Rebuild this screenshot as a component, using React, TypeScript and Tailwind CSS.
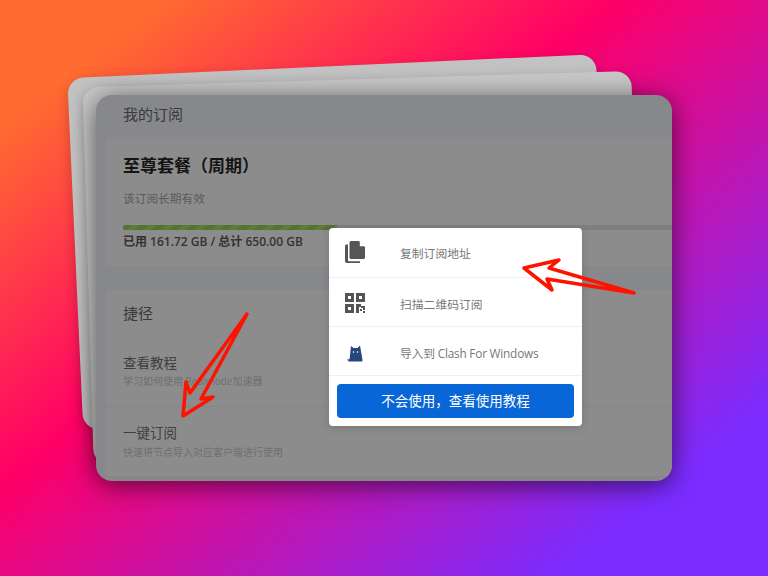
export default function App() {
  const font = { fontFamily: '"Open Sans", "Noto Sans CJK SC", sans-serif' };
  return (
    <div
      style={font}
      className="relative w-[768px] h-[576px] overflow-hidden bg-[linear-gradient(141.700deg,#ff6b30_11%,#ff0066_41%,#7b2cff_86%)] flex items-center justify-center"
    >
      <div className="absolute left-[75px] top-[66px] w-[529px] h-[352px] rounded-2xl bg-[#c2c2c2] rotate-[-2.6deg] shadow-[0_4px_12px_rgba(0,0,0,0.2)]" />
      <div className="absolute left-[88px] top-[79px] w-[549px] h-[378px] rounded-2xl bg-[#c8c8c8] rotate-[-1.7deg] shadow-[0_4px_12px_rgba(0,0,0,0.2)]" />

      <div className="relative w-[576px] h-[386px] rounded-2xl overflow-hidden bg-[#87888b] shadow-[0_4px_26px_rgba(0,0,0,0.6)] pl-[10px]">
        <div className="h-[42px] pl-[17px] flex items-end text-[15px] leading-[26px] text-[#3a3a3a] pb-[10px]">我的订阅</div>
        <section className="h-[129px] bg-[#8c8c8c] pl-[17px] pt-[17px] rounded-l-sm">
          <h2 className="text-[17px] leading-[24px] font-bold text-[#141414]">至尊套餐（周期）</h2>
          <p className="mt-[11px] text-[11.700px] leading-[18px] text-[#5a5a5a]">该订阅长期有效</p>
          <div className="mt-[18px] h-[5px] w-[560px] bg-[#7f7f7f]">
            <div className="h-full w-[214px] rounded-l-full bg-[repeating-linear-gradient(135deg,#557234_0px,#557234_6px,#5e7b3b_6px,#5e7b3b_12px)]" />
          </div>
          <p className="mt-[2px] text-[12px] leading-[20px] font-semibold text-[#333]">已用 161.72 GB / 总计 650.00 GB</p>
        </section>
        <section className="mt-[24px] h-[187px] bg-[#8c8c8c] rounded-l-sm">
          <div className="h-[47px] pl-[17px] flex items-center text-[15px] text-[#3a3a3a] border-b border-[#8a8a8a]">捷径</div>
          <div className="h-[70px] pl-[17px] pt-[16px] border-b border-[#858585]">
            <div className="text-[13.500px] leading-[20px] text-[#3f3f3f]">查看教程</div>
            <div className="mt-[1px] text-[10px] leading-[14px] text-[#6f6f6f]">学习如何使用 Realmode加速器</div>
          </div>
          <div className="h-[70px] pl-[17px] pt-[16px] border-b border-[#858585]">
            <div className="text-[13.500px] leading-[20px] text-[#3f3f3f]">一键订阅</div>
            <div className="mt-[2px] text-[10px] leading-[14px] text-[#6f6f6f]">快速将节点导入对应客户端进行使用</div>
          </div>
        </section>
      </div>

      <div className="absolute left-[329px] top-[228px] w-[253px] h-[198px] bg-white rounded shadow-[0_2px_8px_rgba(0,0,0,0.15)]">
        <div className="h-[49.500px] flex items-center border-b border-[#f0f0f0]">
          <div className="w-[71px] pl-[16px]">
            <svg width="20" height="22" viewBox="0 0 20 22" className="fill-[#555] block">
              <path d="M4.500 1.500 C4.500 .7 5.200 0 6 0 H14 L20 6 V16.500 C20 17.300 19.300 18 18.500 18 H6 C5.200 18 4.500 17.300 4.500 16.500 Z" />
              <path d="M3 3.500 V19.500 C3 20 3.500 20.300 4 20.300 H15 V22 H2 C.8 22 0 21.200 0 20 V5 C0 4.200 .7 3.500 1.500 3.500 Z" />
              <path d="M14 0 V6 H20 Z" fill="#fff" transform="translate(0.8,-0.8)" />
            </svg>
          </div>
          <span className="pt-[3px] text-[11.800px] text-[#777]">复制订阅地址</span>
        </div>
        <div className="h-[49.500px] flex items-center border-b border-[#f0f0f0]">
          <div className="w-[71px] pl-[16px] pt-[2px]">
            <svg width="20" height="20" viewBox="0 0 20 20" className="fill-[#555] block">
              <path fillRule="evenodd" d="M0 0H9V9H0ZM3 3V6H6V3Z" />
              <path fillRule="evenodd" d="M11 0H20V9H11ZM14 3V6H17V3Z" />
              <path fillRule="evenodd" d="M0 11H9V20H0ZM3 14V17H6V14Z" />
              <path d="M11 11H14V20H11ZM14 11H16V14H14ZM16 13H20V17H18V15H16ZM15 16H17V18H15ZM18 18H20V20H18Z" />
            </svg>
          </div>
          <span className="pt-[6px] text-[11.800px] text-[#777]">扫描二维码订阅</span>
        </div>
        <div className="h-[49px] flex items-center border-b border-[#f0f0f0]">
          <div className="w-[71px] pl-[18px] pt-[4px]">
            <svg width="17" height="17" viewBox="0 0 17 17" className="fill-[#27467f] block">
              <path d="M4 1 L6.500 3 H10.500 L13 .5 L15.500 15 C15.500 16 15 16.500 14 16.500 H3.500 C2.500 16.500 2 16 2.500 15 Z" />
              <path d="M3 14 C1 15 0 14 .5 13 C0 15 1 16.500 3 16.500Z" />
              <circle cx="6.500" cy="7" r=".8" fill="#fff" />
              <circle cx="10.500" cy="7" r=".8" fill="#fff" />
            </svg>
          </div>
          <span className="pt-[5px] text-[11.800px] tracking-[-0.2px] text-[#777]">导入到 Clash For Windows</span>
        </div>
        <div className="px-[8px] pt-[8px]">
          <button className="w-full h-[34px] rounded bg-[#0866d6] text-white text-[13.500px]">不会使用，查看使用教程</button>
        </div>
      </div>

      <svg width="768" height="576" viewBox="0 0 768 576" className="absolute left-0 top-0 pointer-events-none" fill="none" stroke="#ff1200" strokeWidth="3.500" strokeLinejoin="round" strokeLinecap="round">
        <path d="M634 293 L549 268 L559 260 L524 268 L552 290 L547 279 Z" />
        <path d="M247 314 L190 393 L186 382 L183 416 L213 397 L201 399 Z" />
      </svg>
    </div>
  );
}
